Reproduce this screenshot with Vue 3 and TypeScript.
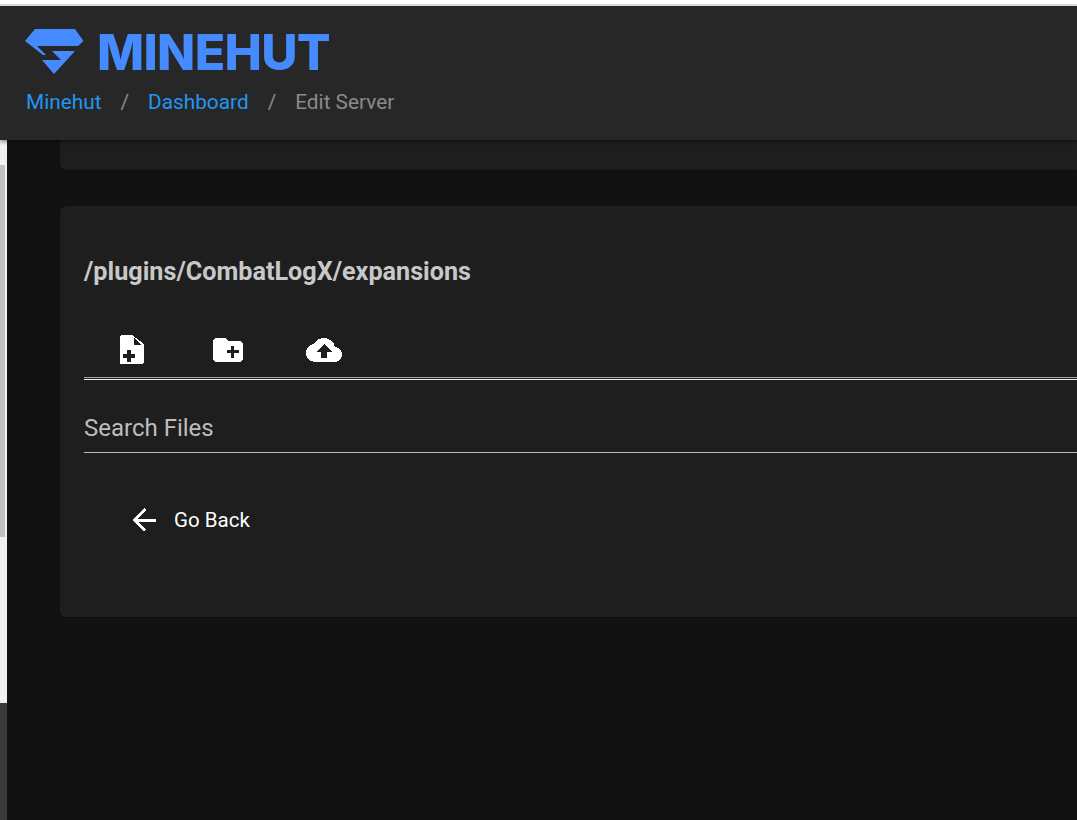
<script setup lang="ts">
const crumbs = [
  { label: 'Minehut', link: true },
  { label: 'Dashboard', link: true },
  { label: 'Edit Server', link: false },
]
</script>

<template>
  <div class="page">
    <div class="topline"></div>
    <header class="header">
      <div class="brand">
        <svg class="logo" width="59" height="46" viewBox="0 0 59 46">
          <path fill="#468aff" d="M10 0H50L58.500 12 53 17H12L21 26H18L0 12Z" />
          <path fill="#468aff" d="M17 31H36L27 22H50L29 45Z" />
        </svg>
        <span class="wordmark">MINEHUT</span>
      </div>
      <nav class="crumbs">
        <template v-for="(c, i) in crumbs" :key="c.label">
          <span :class="c.link ? 'link' : 'current'">{{ c.label }}</span>
          <span v-if="i < crumbs.length - 1" class="sep">/</span>
        </template>
      </nav>
    </header>
    <div class="body">
      <aside class="rail">
        <div class="rail-track"><div class="rail-thumb"></div></div>
        <div class="rail-dark"></div>
      </aside>
      <main class="main">
        <div class="card card-top"></div>
        <section class="card card-files">
          <h2 class="path">/plugins/CombatLogX/expansions</h2>
          <div class="tools">
            <svg class="icon" viewBox="0 0 36 36"><path fill="#fff" fill-rule="evenodd" d="M8 3H18L30 12V30a2 2 0 0 1-2 2H8a2 2 0 0 1-2-2V5a2 2 0 0 1 2-2ZM19.500 5.500V13H27ZM13 18V22H9V26H13V30H17V26H21V22H17V18Z"/></svg>
            <svg class="icon" viewBox="0 0 24 24"><path fill="#fff" d="M20 6h-8l-2-2H4c-1.110 0-2 .89-2 2v12c0 1.100.89 2 2 2h16c1.100 0 2-.9 2-2V8c0-1.100-.9-2-2-2zm-1 8h-3v3h-2v-3h-3v-2h3V9h2v3h3v2z"/></svg>
            <svg class="icon" viewBox="0 0 24 24"><path fill="#fff" d="M19.350 10.040C18.670 6.590 15.640 4 12 4 9.110 4 6.600 5.640 5.350 8.040 2.340 8.360 0 10.910 0 14c0 3.310 2.690 6 6 6h13c2.760 0 5-2.240 5-5 0-2.640-2.050-4.780-4.650-4.960zM14 13v4h-4v-4H7l5-5 5 5h-3z"/></svg>
          </div>
          <div class="rule"></div>
          <div class="search">Search Files</div>
          <div class="back">
            <svg class="icon" viewBox="0 0 24 24"><path fill="#fff" d="M20 11H7.830l5.590-5.590L12 4l-8 8 8 8 1.410-1.410L7.830 13H20v-2z"/></svg>
            <span>Go Back</span>
          </div>
        </section>
      </main>
    </div>
  </div>
</template>

<style>
html, body { margin: 0; background: #121212; overflow: hidden; }
</style>

<style scoped>
.page {
  width: 1077px;
  height: 820px;
  display: flex;
  flex-direction: column;
  overflow: hidden;
  background: #121212;
  font-family: Roboto, "Liberation Sans", sans-serif;
}
.topline { height: 4px; flex: none; background: #fff; border-bottom: 2px solid #e0e0e0; }
.header {
  flex: none;
  height: 134px;
  box-sizing: border-box;
  padding: 23px 0 0 25px;
  background: #272727;
  box-shadow: 0 2px 4px rgba(0, 0, 0, 0.4);
  position: relative;
  z-index: 1;
}
.brand { display: flex; align-items: center; gap: 13px; height: 46px; }
.logo { flex: none; }
.wordmark {
  font-family: Inter, "Liberation Sans", sans-serif;
  font-weight: 800;
  font-size: 50px;
  line-height: 46px;
  letter-spacing: -0.7px;
  color: #468aff;
}
.crumbs { display: flex; align-items: center; gap: 19px; margin-top: 13px; padding-left: 1px; font-size: 20.800px; line-height: 28px; }
.link { color: #2196f3; }
.current, .sep { color: #8a8a8a; }
.body { flex: 1; display: flex; min-height: 0; }
.rail { width: 7px; flex: none; display: flex; flex-direction: column; background: #f1f1f1; }
.rail-track { flex: 1; padding-top: 25px; }
.rail-thumb { width: 5px; height: 372px; background: #c1c1c1; }
.rail-dark { height: 117px; background: #3a3a3a; }
.main { flex: 1; display: flex; flex-direction: column; padding-left: 53px; gap: 36px; }
.card { background: #1e1e1e; border-radius: 6px 0 0 6px; box-shadow: 0 1px 2px rgba(0,0,0,.3); }
.card-top { height: 30px; flex: none; border-radius: 0 0 0 6px; }
.card-files { height: 411px; flex: none; box-sizing: border-box; padding: 50px 0 0 24px; }
.path { margin: 0; font-size: 25.200px; line-height: 32px; font-weight: 700; color: #c8c8c8; }
.icon { width: 36px; height: 36px; flex: none; shape-rendering: crispEdges; }
.tools { display: flex; align-items: center; gap: 60px; height: 55px; margin-top: 34px; padding-left: 30px; }
.rule { height: 1px; border-top: 1px solid #aaa; border-bottom: 1px solid #eee; background: #1e1e1e; }
.search { margin-top: 30px; height: 42px; font-size: 24px; line-height: 36px; color: #bdbdbd; border-bottom: 1px solid #bbb; }
.back { display: flex; align-items: center; gap: 12px; margin: 49px 0 0 42px; color: #fff; font-size: 20.500px; line-height: 36px; }
</style>
